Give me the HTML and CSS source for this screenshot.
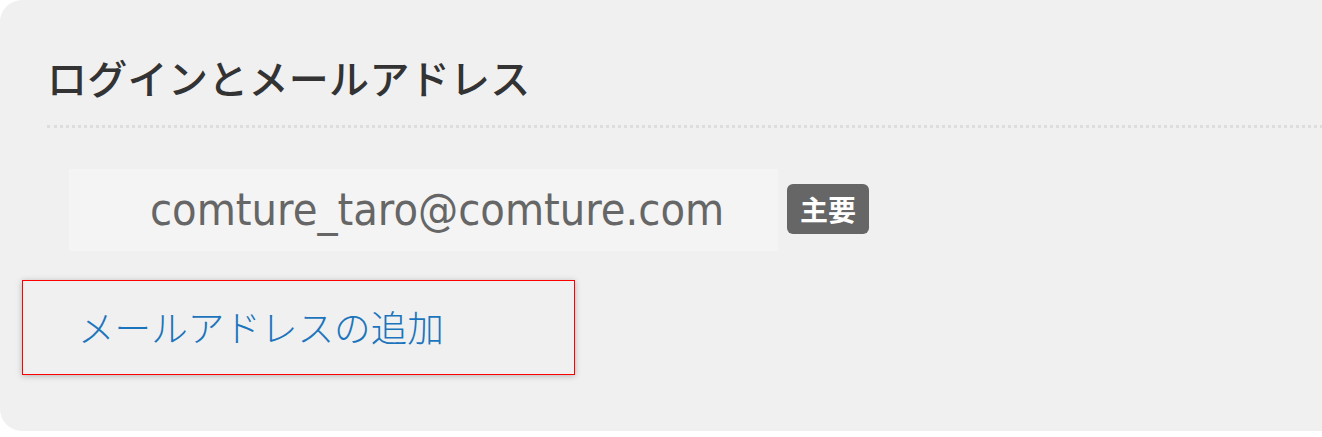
FILE: index.html
```html
<!DOCTYPE html>
<html lang="ja">
<head>
<meta charset="utf-8">
<title>ログインとメールアドレス</title>
<link rel="stylesheet" href="styles.css">
</head>
<body>
<section class="panel">
  <h2 class="panel-title">ログインとメールアドレス</h2>
  <div class="email-row">
    <div class="email-box">comture_taro@comture.com</div>
    <span class="badge">主要</span>
  </div>
  <a class="add-link" href="#">メールアドレスの追加</a>
</section>
</body>
</html>
```
FILE: styles.css
```css
html, body {
  margin: 0;
  padding: 0;
  background: #ffffff;
}

body {
  width: 1322px;
  height: 437px;
  overflow: hidden;
  font-family: "Noto Sans CJK JP", "Noto Sans", sans-serif;
}

.panel {
  box-sizing: border-box;
  width: 1360px;
  height: 431px;
  background: #f0f0f0;
  border-radius: 22px 0 0 22px;
  padding-top: 57px;
}

.panel-title {
  margin: 0 0 0 47px;
  padding-bottom: 28px;
  border-bottom: 3px dotted #dddddd;
  font-size: 40px;
  line-height: 40px;
  font-weight: 500;
  color: #333333;
  letter-spacing: 0.3px;
}

.email-row {
  display: flex;
  align-items: center;
  gap: 9px;
  margin: 41px 0 0 69px;
}

.email-box {
  box-sizing: border-box;
  width: 709px;
  height: 82px;
  padding-left: 81px;
  display: flex;
  align-items: center;
  background: #f4f4f4;
  font-family: "DejaVu Sans Condensed", "DejaVu Sans", sans-serif;
  font-stretch: condensed;
  font-size: 44.7px;
  color: #666666;
}

.badge {
  display: flex;
  align-items: center;
  justify-content: center;
  width: 82px;
  height: 50px;
  border-radius: 6px;
  background: #666666;
  color: #ffffff;
  font-size: 28px;
  font-weight: 700;
  line-height: 1;
  margin-top: -2px;
}

.add-link {
  box-sizing: border-box;
  display: flex;
  align-items: center;
  width: 553px;
  height: 95px;
  margin: 29px 0 0 22px;
  padding-left: 55px;
  border: 1px solid #ff0000;
  box-shadow: 0 1px 6px rgba(0, 0, 0, 0.25);
  color: #1c75bc;
  font-size: 36.6px;
  font-weight: 300;
  line-height: 1;
  text-decoration: none;
}
```
